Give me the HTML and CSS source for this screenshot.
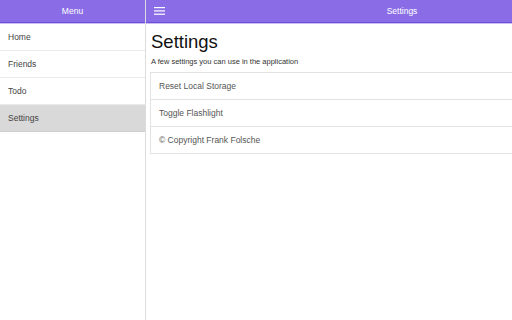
FILE: index.html
```html
<!DOCTYPE html>
<html>
	<head>
		<meta charset="utf-8" />
		<title>Settings</title>
		<link rel="stylesheet" href="styles.css">
	</head>
	<body>
		<aside class="menu">
			<header class="toolbar">
				<span class="toolbar-title">Menu</span>
			</header>
			<nav class="menu-list">
				<a class="menu-item">Home</a>
				<a class="menu-item">Friends</a>
				<a class="menu-item">Todo</a>
				<a class="menu-item active">Settings</a>
			</nav>
		</aside>
		<main class="page">
			<header class="toolbar page-toolbar">
				<button class="menu-button">
					<svg width="11" height="8" viewBox="0 0 11 8">
						<rect x="0" y="0" width="11" height="1.2" fill="#fff" />
						<rect x="0" y="3.3" width="11" height="1.2" fill="#fff" />
						<rect x="0" y="6.6" width="11" height="1.2" fill="#fff" />
					</svg>
				</button>
				<span class="toolbar-title">Settings</span>
			</header>
			<div class="content">
				<h1>Settings</h1>
				<p class="lead">A few settings you can use in the application</p>
				<div class="list">
					<div class="list-item">Reset Local Storage</div>
					<div class="list-item">Toggle Flashlight</div>
					<div class="list-item">© Copyright Frank Folsche</div>
				</div>
			</div>
		</main>
	</body>
</html>
```

FILE: styles.css
```css
* {
	padding: 0;
	margin: 0;
	box-sizing: border-box;
}

html, body {
	height: 100%;
	overflow: hidden;
}

body {
	display: flex;
	background: #fff;
	font-family: 'Liberation Sans', Arial, sans-serif;
	color: #444;
}

.toolbar {
	position: relative;
	display: flex;
	align-items: center;
	justify-content: center;
	height: 23px;
	background: #8a6de6;
	border-bottom: 1px solid #6d4fd6;
	box-shadow: 0 1px 0 #cdbff5;
	color: #fff;
	font-size: 8.5px;
}

.page-toolbar {
	padding-left: 146px;
}

.menu {
	flex: 0 0 146px;
	display: flex;
	flex-direction: column;
	border-right: 1px solid #dcdcdc;
}

.menu-list {
	margin-top: 1px;
}

.menu-item {
	display: flex;
	align-items: center;
	height: 27px;
	padding-left: 8px;
	border-bottom: 1px solid #eaeaea;
	font-size: 8.5px;
	color: #444;
}

.menu-item.active {
	background: #d9d9d9;
	border-bottom-color: #cfcfcf;
}

.page {
	flex: 1;
	min-width: 0;
	display: flex;
	flex-direction: column;
}

.menu-button {
	position: absolute;
	left: 8px;
	top: 7px;
	border: none;
	background: none;
	display: flex;
}

.content {
	padding: 8px 0 0 4px;
}

h1 {
	font-weight: normal;
	font-size: 18.5px;
	line-height: 21px;
	color: #111;
	padding: 0 0 5px 1px;
}

.lead {
	font-size: 7.5px;
	line-height: 9px;
	color: #333;
	padding-left: 1px;
	margin-bottom: 6px;
}

.list {
	border: 1px solid #e2e2e2;
	border-right: none;
	border-bottom: none;
}

.list-item {
	display: flex;
	align-items: center;
	height: 27px;
	padding-left: 8px;
	border-bottom: 1px solid #e2e2e2;
	font-size: 8.5px;
	color: #555;
}
```
